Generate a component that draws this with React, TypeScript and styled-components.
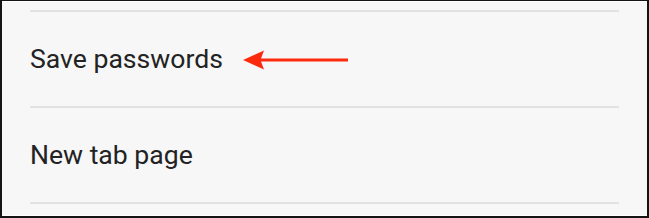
import React from "react";
import styled, { createGlobalStyle } from "styled-components";

const Global = createGlobalStyle`
  html, body { margin: 0; padding: 0; background: #f7f7f7; }
  * { box-sizing: border-box; }
`;

const Frame = styled.div`
  width: 649px;
  height: 218px;
  background: #f7f7f7;
  border-style: solid;
  border-color: #141414;
  border-width: 1px 2px 2px 2px;
  box-shadow: inset 0 1px 0 #ffffff, inset 0 -1px 0 #ffffff;
  padding: 9px 28px 0 28px;
  display: flex;
  flex-direction: column;
  font-family: Roboto, "Liberation Sans", sans-serif;
`;

const Divider = styled.div`
  height: 2px;
  background: #e2e2e2;
  flex: none;
`;

const Row = styled.div`
  height: 94px;
  display: flex;
  align-items: center;
  gap: 20px;
  color: #232323;
  font-size: 26.6px;
`;

const Label = styled.span`
  line-height: 1;
  margin-top: 1px;
`;

const Arrow = () => (
  <svg width="106" height="20" viewBox="0 0 106 20" style={{ display: "block" }}>
    <polygon
      points="0,10 21,0.5 18,8.4 105,8.4 105,11.6 18,11.6 21,19.5"
      fill="#fb2a0c"
    />
  </svg>
);

const ArrowSlot = styled.span`
  display: flex;
  align-items: center;
  margin-top: 2px;
`;

export default function App() {
  return (
    <>
      <Global />
      <Frame>
        <Divider />
        <Row>
          <Label>Save passwords</Label>
          <ArrowSlot>
            <Arrow />
          </ArrowSlot>
        </Row>
        <Divider />
        <Row>
          <Label>New tab page</Label>
        </Row>
        <Divider />
      </Frame>
    </>
  );
}
